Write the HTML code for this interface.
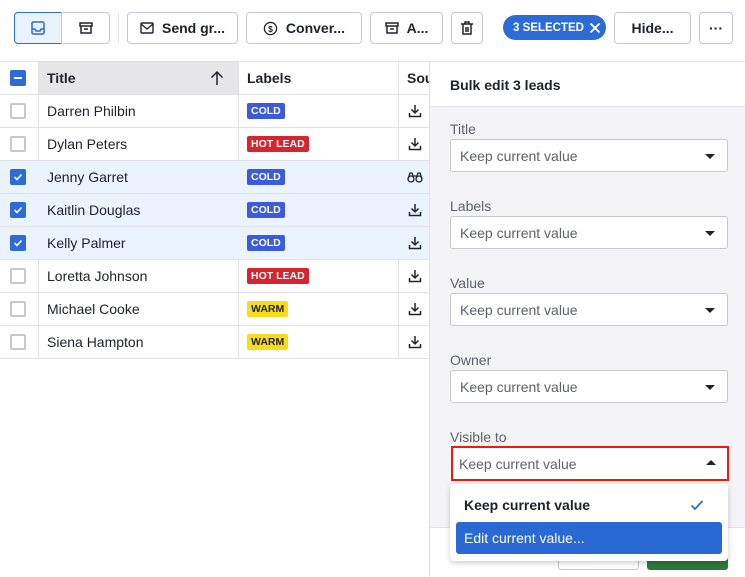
<!DOCTYPE html><html><head><style>
*{box-sizing:border-box;margin:0;padding:0}
body{width:745px;height:577px;overflow:hidden;background:#fff;font-family:"Liberation Sans",sans-serif;color:#21232c;position:relative;font-size:14px}
.btn{position:absolute;top:12px;height:32px;border:1px solid #c6c8ce;border-radius:4px;background:#fff;display:flex;align-items:center;justify-content:center;font-weight:bold;font-size:14px;gap:8px}
.abs{position:absolute}
.row{position:absolute;left:0;width:430px;height:33px;border-bottom:1px solid #e0e2e6}
.row div{position:absolute;top:0;height:32px;display:flex;align-items:center}
.cb{left:10px;top:8px!important;width:16px!important;height:16px!important;border:2px solid #c6c8ce;border-radius:2px;background:#fff;justify-content:center}
.cb.on{background:#2d6bd6;border-color:#2d6bd6}
.tag{font-size:10.5px;font-weight:bold;color:#fff;padding:2px 4px;border-radius:2px;height:auto!important;top:8px!important}
.cold{background:#3b5bdb}.hot{background:#d6252f}.warm{background:#f7dc1a;color:#21232c}
.lbl{position:absolute;left:450px;font-size:14px;color:#5f626b}
.sel{position:absolute;left:450px;width:278px;height:33px;border:1px solid #c6c8ce;border-radius:3px;background:#fff;padding-left:9px;display:flex;align-items:center;color:#5f626b;font-size:14px}
.dn:after{content:"";position:absolute;right:12px;top:14px;border:5px solid transparent;border-top:5px solid #21232c;border-bottom:0}
</style></head><body>
<svg width="0" height="0" style="position:absolute"><defs>
<symbol id="dl" viewBox="0 0 14 14"><path d="M7 1v8M3.5 5.5L7 9l3.5-3.5M1.5 9v3.5h11V9" fill="none" stroke="#21232c" stroke-width="1.5"/></symbol>
<symbol id="ck" viewBox="0 0 12 12"><path d="M2.5 6l2.5 2.5 4.5-5" fill="none" stroke="#fff" stroke-width="1.6"/></symbol>
</defs></svg>
<div class="btn" style="left:14px;width:48px;background:#eaf2fd;border-color:#2d6bd6;border-radius:4px 0 0 4px"><svg width="16" height="16" viewBox="0 0 16 16" fill="none" stroke="#2d6bd6" stroke-width="1.5"><rect x="2" y="2" width="12" height="12" rx="1.5"/><path d="M2 9h3l1 2h4l1-2h3"/></svg></div>
<div class="btn" style="left:61px;width:49px;border-radius:0 4px 4px 0"><svg width="14" height="14" viewBox="0 0 14 14" fill="none" stroke="#21232c" stroke-width="1.5"><rect x="1" y="2" width="12" height="3"/><path d="M2 5v7h10V5M5 8h4"/></svg></div>
<div class="abs" style="left:118px;top:13px;width:1px;height:30px;background:#e0e2e6"></div>
<div class="btn" style="left:127px;width:111px"><svg width="14" height="12" viewBox="0 0 14 12" fill="none" stroke="#21232c" stroke-width="1.4"><rect x="1" y="1" width="12" height="10" rx="1"/><path d="M1 2l6 5 6-5"/></svg>Send gr...</div>
<div class="btn" style="left:246px;width:116px"><svg width="15" height="15" viewBox="0 0 16 16" fill="none" stroke="#21232c" stroke-width="1.4"><circle cx="8" cy="8" r="6.5"/><text x="8" y="11.5" font-size="9" text-anchor="middle" fill="#21232c" stroke="none" font-weight="bold">$</text></svg>Conver...</div>
<div class="btn" style="left:370px;width:73px"><svg width="14" height="14" viewBox="0 0 14 14" fill="none" stroke="#21232c" stroke-width="1.5"><rect x="1" y="2" width="12" height="3"/><path d="M2 5v7h10V5M5 8h4"/></svg>A...</div>
<div class="btn" style="left:451px;width:32px"><svg width="14" height="16" viewBox="0 0 14 16" fill="none" stroke="#21232c" stroke-width="1.5"><path d="M1 4h12M5 4V2h4v2M3 4v10h8V4M6 7v5M8 7v5"/></svg></div>
<div class="abs" style="left:503px;top:15px;width:103px;height:25px;border-radius:13px;background:#2d6bd6;color:#fff;font-size:11.5px;font-weight:bold;display:flex;align-items:center;padding-left:10px;gap:5px;white-space:nowrap">3 SELECTED <svg width="12" height="12" viewBox="0 0 12 12"><path d="M1.5 1.5l9 9M10.5 1.5l-9 9" stroke="#fff" stroke-width="1.8"/></svg></div>
<div class="btn" style="left:614px;width:77px">Hide...</div>
<div class="btn" style="left:699px;width:34px">···</div>
<div class="abs" style="left:0;top:61px;width:745px;height:1px;background:#e0e2e6"></div>
<div class="row" style="top:62px;height:33px">
<div class="cb on"><span style="width:8px;height:2px;background:#fff"></span></div>
<div style="left:39px;width:200px;background:#e6e6e8;padding-left:8px;font-weight:bold;font-size:14px;border-right:1px solid #e0e2e6">Title<svg style="position:absolute;right:14px" width="14" height="16" viewBox="0 0 14 16"><path d="M7 15V2M1.5 7.5L7 2l5.5 5.5" fill="none" stroke="#21232c" stroke-width="1.5"/></svg></div>
<div style="left:239px;width:160px;padding-left:8px;font-weight:bold;border-right:1px solid #e0e2e6">Labels</div>
<div style="left:399px;width:31px;padding-left:8px;font-weight:bold;overflow:hidden">Sou</div>
</div>
<div class="abs" style="left:38px;top:62px;width:1px;height:297px;background:#e0e2e6"></div>
<div class="abs" style="left:238px;top:62px;width:1px;height:297px;background:#e0e2e6"></div>
<div class="abs" style="left:398px;top:62px;width:1px;height:297px;background:#e0e2e6"></div>
<div class="row" style="top:95px"><div class="cb"></div><div style="left:47px">Darren Philbin</div><div class="tag cold" style="left:247px">COLD</div><div style="left:408px"><svg width="14" height="14"><use href="#dl"/></svg></div></div>
<div class="row" style="top:128px"><div class="cb"></div><div style="left:47px">Dylan Peters</div><div class="tag hot" style="left:247px">HOT LEAD</div><div style="left:408px"><svg width="14" height="14"><use href="#dl"/></svg></div></div>
<div class="row" style="top:161px;background:#eaf3fe"><div class="cb on"><svg width="12" height="12"><use href="#ck"/></svg></div><div style="left:47px">Jenny Garret</div><div class="tag cold" style="left:247px">COLD</div><div style="left:407px"><svg width="16" height="12" viewBox="0 0 16 12" fill="none" stroke="#21232c" stroke-width="1.3"><circle cx="4" cy="8" r="3"/><circle cx="12" cy="8" r="3"/><path d="M1 8l2-6h2l1 3h4l1-3h2l2 6"/></svg></div></div>
<div class="row" style="top:194px;background:#eaf3fe"><div class="cb on"><svg width="12" height="12"><use href="#ck"/></svg></div><div style="left:47px">Kaitlin Douglas</div><div class="tag cold" style="left:247px">COLD</div><div style="left:408px"><svg width="14" height="14"><use href="#dl"/></svg></div></div>
<div class="row" style="top:227px;background:#eaf3fe"><div class="cb on"><svg width="12" height="12"><use href="#ck"/></svg></div><div style="left:47px">Kelly Palmer</div><div class="tag cold" style="left:247px">COLD</div><div style="left:408px"><svg width="14" height="14"><use href="#dl"/></svg></div></div>
<div class="row" style="top:260px"><div class="cb"></div><div style="left:47px">Loretta Johnson</div><div class="tag hot" style="left:247px">HOT LEAD</div><div style="left:408px"><svg width="14" height="14"><use href="#dl"/></svg></div></div>
<div class="row" style="top:293px"><div class="cb"></div><div style="left:47px">Michael Cooke</div><div class="tag warm" style="left:247px">WARM</div><div style="left:408px"><svg width="14" height="14"><use href="#dl"/></svg></div></div>
<div class="row" style="top:326px"><div class="cb"></div><div style="left:47px">Siena Hampton</div><div class="tag warm" style="left:247px">WARM</div><div style="left:408px"><svg width="14" height="14"><use href="#dl"/></svg></div></div>
<div class="abs" style="left:429px;top:62px;width:316px;height:515px;background:#f4f4f6;border-left:1px solid #e0e2e6"></div>
<div class="abs" style="left:430px;top:62px;width:315px;height:45px;background:#fff;border-bottom:1px solid #e0e2e6;padding:15px 0 0 20px;font-weight:bold;font-size:14px">Bulk edit 3 leads</div>
<div class="abs" style="left:430px;top:527px;width:315px;height:50px;background:#fff;border-top:1px solid #e0e2e6"></div>
<div class="abs" style="left:558px;top:540px;width:81px;height:30px;border:1px solid #c6c8ce;border-radius:3px;background:#fff"></div>
<div class="abs" style="left:647px;top:540px;width:81px;height:30px;border-radius:3px;background:#2a7a3b"></div>
<div class="lbl" style="top:121px">Title</div><div class="sel dn" style="top:139px">Keep current value</div>
<div class="lbl" style="top:198px">Labels</div><div class="sel dn" style="top:216px">Keep current value</div>
<div class="lbl" style="top:275px">Value</div><div class="sel dn" style="top:293px">Keep current value</div>
<div class="lbl" style="top:352px">Owner</div><div class="sel dn" style="top:370px">Keep current value</div>
<div class="lbl" style="top:429px">Visible to</div>
<div class="abs" style="left:451px;top:446px;width:278px;height:35px;border:2px solid #f0190f"></div>
<div class="sel" style="top:448px;left:453px;width:274px;height:31px;border:0;border-radius:0;padding-left:6px">Keep current value</div>
<div class="abs" style="left:706px;top:460px;border:5px solid transparent;border-bottom:5px solid #21232c;border-top:0"></div>
<div class="abs" style="left:450px;top:484px;width:278px;height:77px;background:#fff;border-radius:4px;box-shadow:0 2px 6px rgba(0,0,0,.2)"></div>
<div class="abs" style="left:464px;top:497px;font-weight:bold">Keep current value</div>
<svg class="abs" style="left:690px;top:499px" width="14" height="12" viewBox="0 0 14 12"><path d="M1.5 6.5l3.5 3.5 7.5-8" fill="none" stroke="#2d6bd6" stroke-width="1.8"/></svg>
<div class="abs" style="left:456px;top:522px;width:266px;height:32px;background:#2a69d4;border-radius:3px;color:#fff;padding:8px 0 0 8px">Edit current value...</div>
</body></html>
